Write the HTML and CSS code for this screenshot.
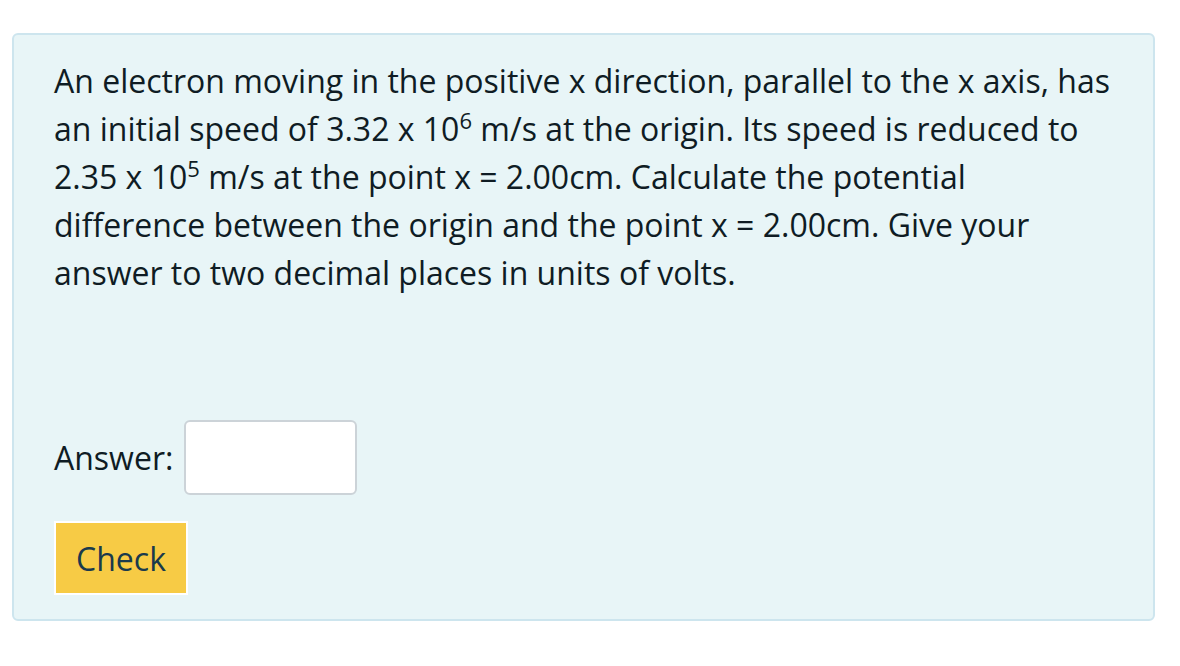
FILE: index.html
```html
<!DOCTYPE html>
<html>
<head>
<meta charset="utf-8">
<link rel="stylesheet" href="styles.css">
</head>
<body>
<div class="question">
  <p class="qtext">An electron moving in the positive x direction, parallel to the x axis, has an initial speed of 3.32 x 10<span class="exp">6</span> m/s at the origin. Its speed is reduced to 2.35 x 10<span class="exp">5</span> m/s at the point x = 2.00cm. Calculate the potential difference between the origin and the point x = 2.00cm. Give your answer to two decimal places in units of volts.</p>
  <div class="answer">
    <label class="label" for="ans">Answer:</label>
    <input class="input" id="ans" type="text">
  </div>
  <button class="check">Check</button>
</div>
</body>
</html>
```
FILE: styles.css
```css
html, body {
  margin: 0;
  padding: 0;
  background: #ffffff;
}
body {
  padding: 33px 25px 0 12px;
  font-family: "Open Sans", sans-serif;
  color: #0f1c24;
}
.question {
  box-sizing: border-box;
  width: 1143px;
  height: 588px;
  background: #e8f5f7;
  border: 2px solid #cde5ee;
  border-radius: 6px;
  padding: 22px 40px 24px 40px;
  display: flex;
  flex-direction: column;
  align-items: flex-start;
}
.qtext {
  margin: 0;
  font-size: 32px;
  line-height: 48px;
}
.exp {
  font-size: 22px;
  line-height: 1;
  vertical-align: 12px;
}
.answer {
  display: flex;
  align-items: center;
  gap: 11px;
  margin-top: 123px;
}
.label {
  font-size: 32px;
}
.input {
  box-sizing: border-box;
  width: 173px;
  height: 75px;
  background: #ffffff;
  border: 2px solid #ccd3d8;
  border-radius: 6px;
  margin: 0;
}
.check {
  margin-top: 26px;
  box-sizing: border-box;
  width: 134px;
  height: 74px;
  background: #f7cb45;
  border: 2px solid #ffffff;
  border-radius: 0;
  font-family: "Open Sans", sans-serif;
  font-size: 32px;
  color: #1a3a4c;
  padding: 0;
}
```
